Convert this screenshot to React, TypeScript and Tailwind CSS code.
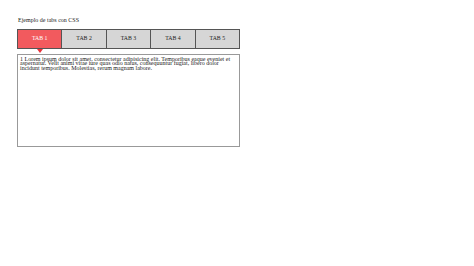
import React, { useState } from "react";

const tabs = ["TAB 1", "TAB 2", "TAB 3", "TAB 4", "TAB 5"];

const text =
  "Lorem ipsum dolor sit amet, consectetur adipisicing elit. Temporibus eaque eveniet et aspernatur. Velit animi vitae iure quas odio natus, consequuntur fugiat, libero dolor incidunt temporibus. Molestias, rerum magnam labore.";

const App = () => {
  const [active, setActive] = useState(0);

  return (
    <div className="w-[474px] h-[266px] bg-white pl-[17px] pt-[16px] font-['Liberation_Serif',serif] text-[#222]">
      <p className="text-[6px] leading-[8px] ml-px">Ejemplo de tabs con CSS</p>
      <div className="mt-[5px] w-[223px] flex border border-[#555]">
        {tabs.map((t, i) => (
          <button
            key={t}
            onClick={() => setActive(i)}
            className={
              "relative flex-1 h-[18px] text-[5.8px] leading-none " +
              (i > 0 ? "border-l border-[#555] " : "") +
              (i === active ? "bg-[#f25a5e] text-white" : "bg-[#d6d6d6] text-[#222]")
            }
          >
            {t}
            {i === active && (
              <span className="absolute left-1/2 -translate-x-1/2 top-full mt-px w-0 h-0 border-l-[3px] border-r-[3px] border-t-[4px] border-l-transparent border-r-transparent border-t-[#e8323a]" />
            )}
          </button>
        ))}
      </div>
      <div className="mt-[5px] w-[223px] h-[93px] border border-[#999] px-[2px] pt-[2px] text-[6px] leading-[4.4px]">
        {active + 1} {text}
      </div>
    </div>
  );
};

export default App;
